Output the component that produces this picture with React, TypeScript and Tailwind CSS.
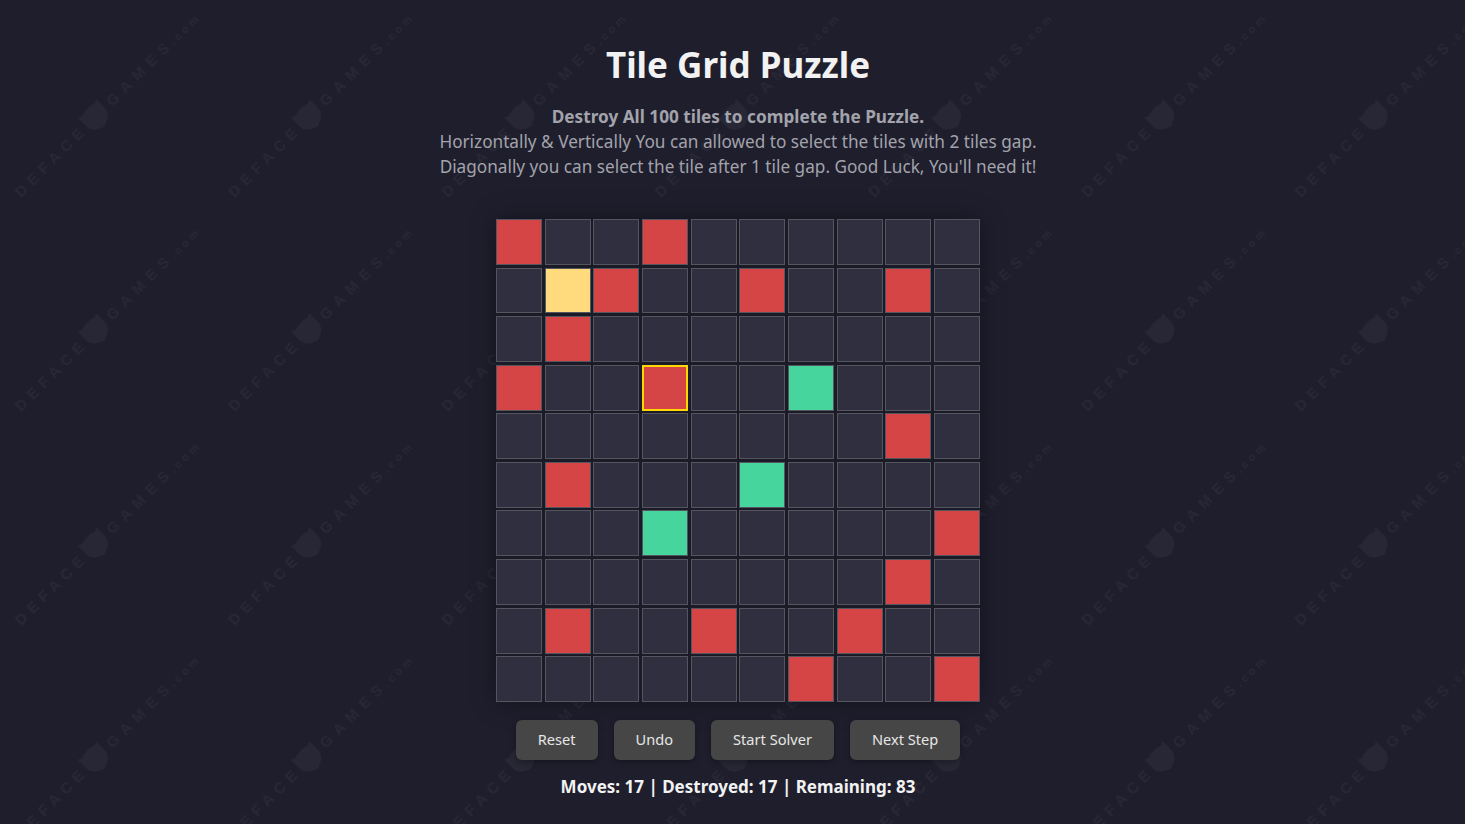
import { useState } from 'react';

type Tile = 'empty' | 'red' | 'yellow' | 'green';

// destroyed tiles per row (column indexes)
const destroyed: number[][] = [
  [0, 3],
  [2, 5, 8],
  [1],
  [0, 3],
  [8],
  [1],
  [9],
  [8],
  [1, 4, 7],
  [6, 9],
];

const hints: Record<string, Tile> = {
  '1-1': 'yellow',
  '3-6': 'green',
  '5-5': 'green',
  '6-3': 'green',
};

function buildGrid(): Tile[][] {
  return Array.from({ length: 10 }, (_, r) =>
    Array.from({ length: 10 }, (_, c) => {
      if (destroyed[r].includes(c)) return 'red';
      return hints[`${r}-${c}`] || 'empty';
    })
  );
}

const tileClass: Record<Tile, string> = {
  empty: 'bg-[#2f2f40] border-[#555560]',
  red: 'bg-[#d64545] border-[#555560]',
  yellow: 'bg-[#ffdb7e] border-[#555560]',
  green: 'bg-[#45d59d] border-[#555560]',
};

function Watermark() {
  return (
    <svg className="absolute inset-0 w-full h-full pointer-events-none" aria-hidden="true">
      <defs>
        <pattern id="wm" width="213.3" height="214" patternUnits="userSpaceOnUse">
          <g transform="translate(106,105) rotate(-45)" fill="#ffffff" fillOpacity="0.04">
            <text
              x="-36"
              y="6"
              textAnchor="end"
              fontFamily="'Liberation Sans', sans-serif"
              fontWeight="700"
              fontSize="15"
              textLength="90"
              lengthAdjust="spacing"
            >
              DEFACE
            </text>
            {/* shield logo */}
            <path d="M-29,-11 L-25,-9 Q-15,-12 -7,-9 L-3,-11 L-3,1 Q-3,10 -16,14 Q-29,10 -29,1 Z" />
            <text
              x="3"
              y="6"
              fontFamily="'Liberation Sans', sans-serif"
              fontWeight="700"
              fontSize="15"
              textLength="82"
              lengthAdjust="spacing"
            >
              GAMES
            </text>
            <text
              x="90"
              y="6"
              fontFamily="'Liberation Sans', sans-serif"
              fontWeight="700"
              fontSize="11"
              textLength="36"
              lengthAdjust="spacing"
            >
              .com
            </text>
          </g>
        </pattern>
      </defs>
      <rect width="100%" height="100%" fill="url(#wm)" />
    </svg>
  );
}

export default function App() {
  const [grid] = useState<Tile[][]>(buildGrid);
  const selected = '3-3';

  return (
    <main
      className="relative min-h-screen bg-[#1e1e2d] overflow-hidden"
      style={{ fontFamily: "'Noto Sans', 'Open Sans', sans-serif" }}
    >
      <Watermark />
      <div className="relative flex flex-col items-center pl-[11px]">
        <h1 className="mt-[44px] text-[35px] leading-[42px] font-bold text-[#f2f2f2]">
          Tile Grid Puzzle
        </h1>

        <div className="mt-[18px] text-center text-[17.2px] leading-[25px] text-[#a3a3ab]">
          <p className="font-bold">Destroy All 100 tiles to complete the Puzzle.</p>
          <p>Horizontally &amp; Vertically You can allowed to select the tiles with 2 tiles gap.</p>
          <p>Diagonally you can select the tile after 1 tile gap. Good Luck, You'll need it!</p>
        </div>

        <div className="mt-[40px] grid grid-cols-10 gap-[2.7px] w-[484px] bg-[#1b1b28] shadow-[0_0_24px_rgba(0,0,0,0.35)]">
          {grid.map((row, r) =>
            row.map((tile, c) => {
              const key = `${r}-${c}`;
              return (
                <div
                  key={key}
                  className={`h-[45.9px] border ${
                    key === selected ? 'bg-[#d64545] border-2 border-[#ffd700]' : tileClass[tile]
                  }`}
                />
              );
            })
          )}
        </div>

        <div className="mt-[18px] flex gap-[16px]">
          {['Reset', 'Undo', 'Start Solver', 'Next Step'].map((label) => (
            <button
              key={label}
              className="h-[40px] px-[22px] rounded-[6px] bg-[#464646] text-[14.6px] text-[#e6e6e6] shadow-[0_2px_6px_rgba(0,0,0,0.3)]"
            >
              {label}
            </button>
          ))}
        </div>

        <p className="mt-[15px] text-[17px] leading-[24px] font-bold text-[#f2f2f2]">
          Moves: 17 | Destroyed: 17 | Remaining: 83
        </p>
      </div>
    </main>
  );
}
